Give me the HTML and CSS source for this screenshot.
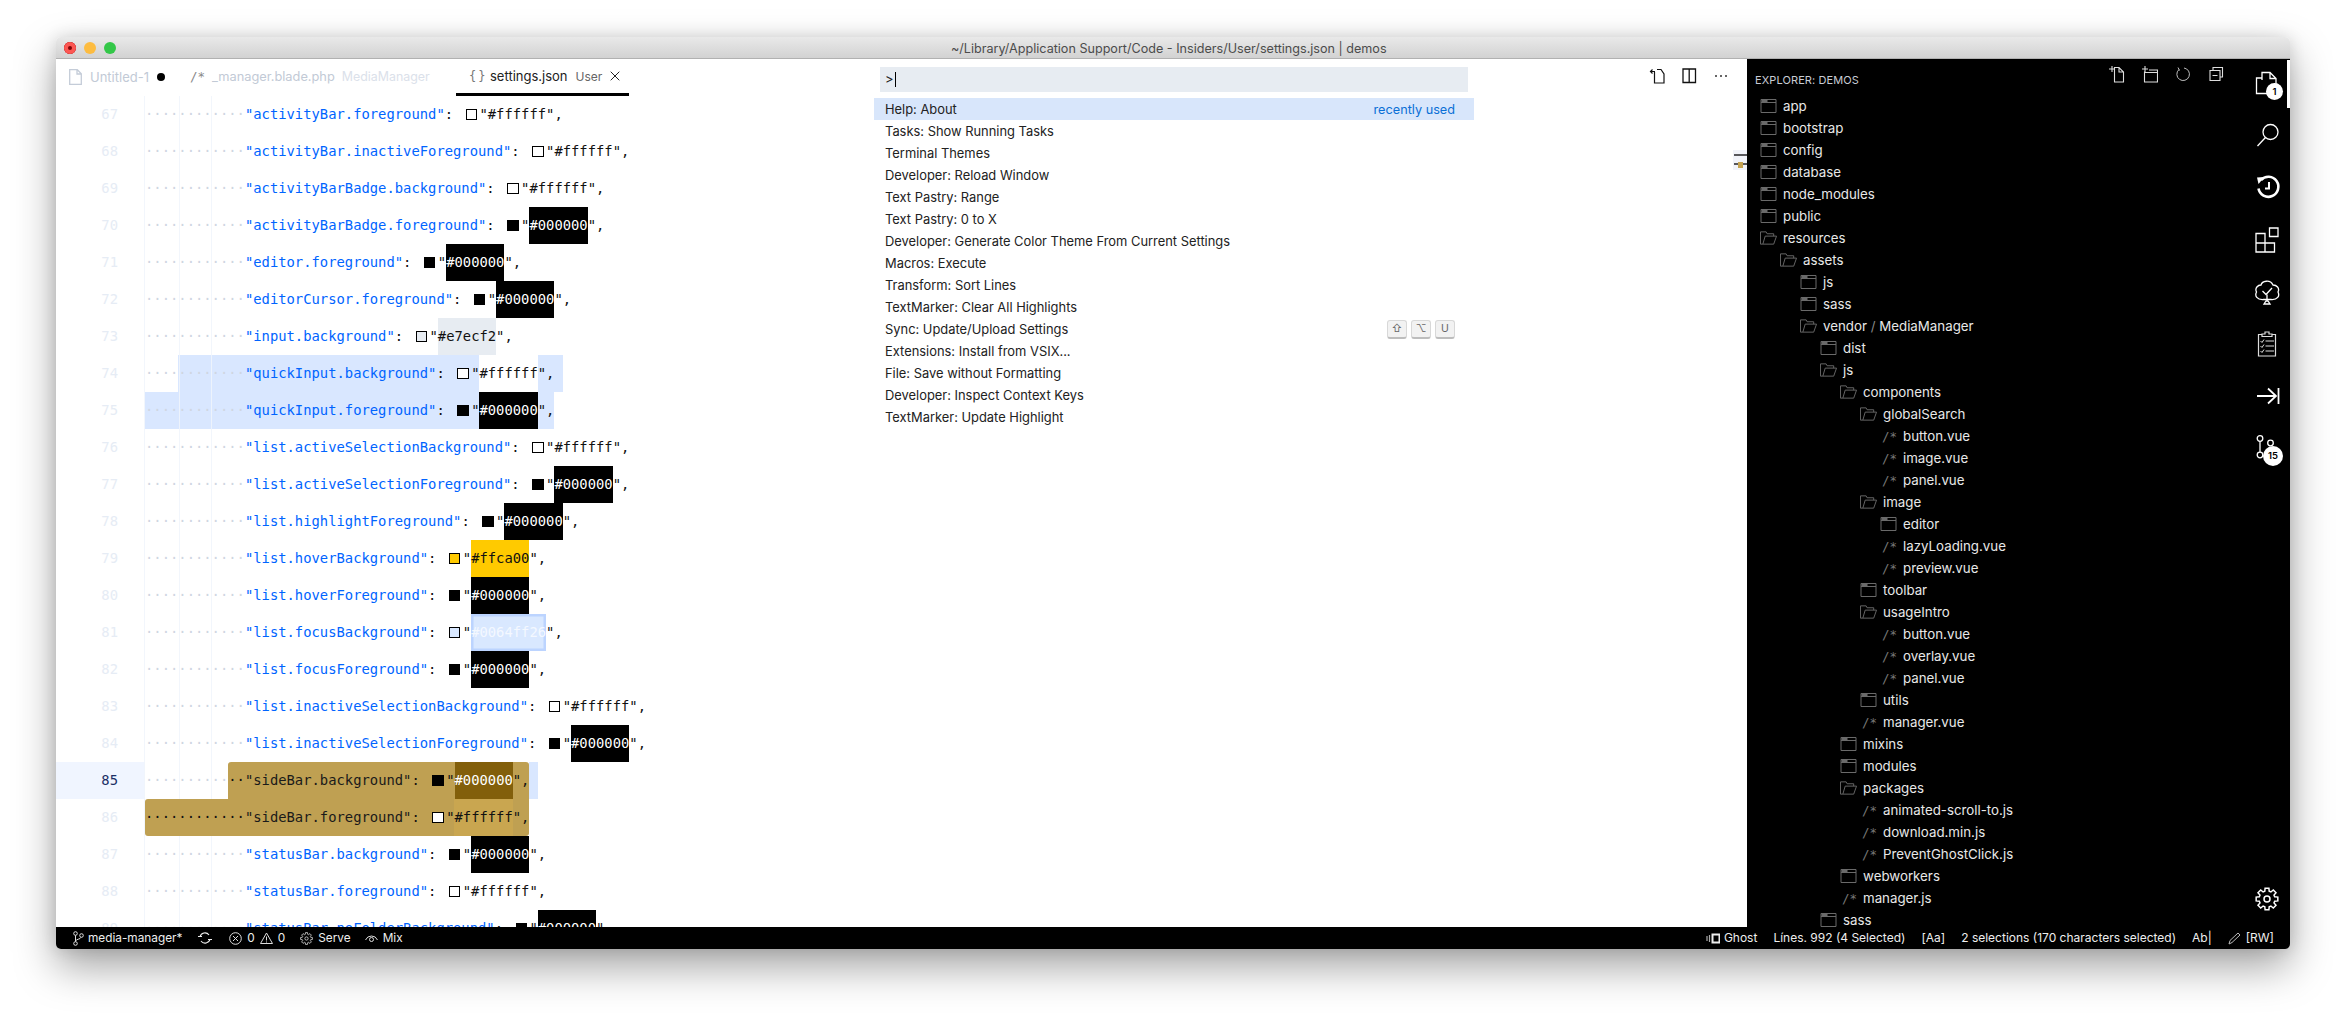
FILE: index.html
```html
<!DOCTYPE html>
<html lang="en">
<head>
<meta charset="utf-8">
<title>settings.json</title>
<link rel="stylesheet" href="styles.css">
</head>
<body>
<svg class="defs" width="0" height="0" aria-hidden="true">
  <symbol id="fc" viewBox="0 0 16 14"><path d="M.5.5h15v13H.5z M.5 3.5h15" fill="none" stroke="#6a6a6a"/><path d="M1 1h6v2H1z" fill="#6a6a6a"/></symbol>
  <symbol id="fo" viewBox="0 0 18 14"><path d="M3 13.5H.5V.5h6l1 2h7v2.5 M3 13.5 5.5 5h12l-3 8.500z" fill="none" stroke="#6a6a6a"/></symbol>
  <symbol id="gear" viewBox="-12 -12 24 24"><polygon points="7.69,-2.2 10.83,-1.91 10.83,1.91 7.69,2.2 7,3.88 9.01,6.31 6.31,9.01 3.88,7 2.2,7.69 1.91,10.83 -1.91,10.83 -2.2,7.69 -3.88,7 -6.31,9.01 -9.01,6.31 -7,3.88 -7.69,2.2 -10.83,1.91 -10.83,-1.91 -7.69,-2.2 -7,-3.88 -9.01,-6.31 -6.31,-9.01 -3.88,-7 -2.2,-7.69 -1.91,-10.83 1.91,-10.83 2.2,-7.69 3.88,-7 6.31,-9.01 9.01,-6.31 7,-3.88" fill="none" stroke="currentColor" stroke-width="1.5"/><circle r="3" fill="none" stroke="currentColor" stroke-width="1.5"/></symbol>
</svg>
<div class="window">
  <header class="titlebar">
    <span class="light red"></span><span class="light yellow"></span><span class="light green"></span>
    <span class="title">~/Library/Application Support/Code - Insiders/User/settings.json | demos</span>
  </header>
  <div class="main">
    <section class="editor">
      <div class="tabs">
        <div class="tab tab1">
          <svg class="i-file" width="13" height="16" viewBox="0 0 13 16"><path d="M.7.7h7.600l4 4v10.600H.7z M8 .7v4.300h4.300" fill="none" stroke="#c4ccd8" stroke-width="1.300"/></svg>
          <span class="dim">Untitled-1</span><span class="dirty"></span>
        </div>
        <div class="tab tab2"><span class="star">/*</span><span class="dim">_manager.blade.php</span><span class="dimmer">MediaManager</span></div>
        <div class="tab tab3"><span class="braces">{}</span><span class="name">settings.json</span><span class="user">User</span>
          <svg class="i-x" width="10" height="10" viewBox="0 0 10 10"><path d="M.7.7l8.600 8.600M9.300.7.7 9.300" stroke="#222" stroke-width="1"/></svg>
        </div>
        <div class="tab-actions">
          <svg width="16" height="16" viewBox="0 0 16 16"><path d="M5.500 4V15h9.500V6L12 1.500H8" fill="none" stroke="#111" stroke-width="1.200"/><path d="M6 3.500H1.800M3.500 1.500 1.500 3.500l2 2" fill="none" stroke="#111" stroke-width="1.200"/></svg>
          <svg width="16" height="16" viewBox="0 0 16 16"><path d="M2 1h12.500v13.500H2z M8.200 1v13.500" fill="none" stroke="#111" stroke-width="1.300"/></svg>
          <svg width="16" height="16" viewBox="0 0 16 16"><circle cx="3" cy="8" r="1" fill="#333"/><circle cx="8" cy="8" r="1" fill="#333"/><circle cx="13" cy="8" r="1" fill="#333"/></svg>
        </div>
      </div>
      <div class="code-area">
        <div class="row"><span class="ln">67</span><span class="code"><span class="ws">············</span><span class="k">"activityBar.foreground"</span>: <i class="dec w"></i>"#ffffff",</span></div>
        <div class="row"><span class="ln">68</span><span class="code"><span class="ws">············</span><span class="k">"activityBar.inactiveForeground"</span>: <i class="dec w"></i>"#ffffff",</span></div>
        <div class="row"><span class="ln">69</span><span class="code"><span class="ws">············</span><span class="k">"activityBarBadge.background"</span>: <i class="dec w"></i>"#ffffff",</span></div>
        <div class="row"><span class="ln">70</span><span class="code"><span class="ws">············</span><span class="k">"activityBarBadge.foreground"</span>: <i class="dec b"></i>"<span class="hl black">#000000</span>",</span></div>
        <div class="row"><span class="ln">71</span><span class="code"><span class="ws">············</span><span class="k">"editor.foreground"</span>: <i class="dec b"></i>"<span class="hl black">#000000</span>",</span></div>
        <div class="row"><span class="ln">72</span><span class="code"><span class="ws">············</span><span class="k">"editorCursor.foreground"</span>: <i class="dec b"></i>"<span class="hl black">#000000</span>",</span></div>
        <div class="row"><span class="ln">73</span><span class="code"><span class="ws">············</span><span class="k">"input.background"</span>: <i class="dec e"></i>"<span class="hl grey">#e7ecf2</span>",</span></div>
        <div class="row"><span class="ln">74</span><span class="code"><span class="ws">····</span><span class="sel"><span class="ws">········</span><span class="k">"quickInput.background"</span>: <i class="dec w"></i>"</span><span class="hl white">#ffffff</span><span class="sel">", </span></span></div>
        <div class="row"><span class="ln">75</span><span class="code"><span class="sel"><span class="ws">············</span><span class="k">"quickInput.foreground"</span>: <i class="dec b"></i>"</span><span class="hl black">#000000</span><span class="sel">",</span></span></div>
        <div class="row"><span class="ln">76</span><span class="code"><span class="ws">············</span><span class="k">"list.activeSelectionBackground"</span>: <i class="dec w"></i>"#ffffff",</span></div>
        <div class="row"><span class="ln">77</span><span class="code"><span class="ws">············</span><span class="k">"list.activeSelectionForeground"</span>: <i class="dec b"></i>"<span class="hl black">#000000</span>",</span></div>
        <div class="row"><span class="ln">78</span><span class="code"><span class="ws">············</span><span class="k">"list.highlightForeground"</span>: <i class="dec b"></i>"<span class="hl black">#000000</span>",</span></div>
        <div class="row"><span class="ln">79</span><span class="code"><span class="ws">············</span><span class="k">"list.hoverBackground"</span>: <i class="dec y"></i>"<span class="hl amber">#ffca00</span>",</span></div>
        <div class="row"><span class="ln">80</span><span class="code"><span class="ws">············</span><span class="k">"list.hoverForeground"</span>: <i class="dec b"></i>"<span class="hl black">#000000</span>",</span></div>
        <div class="row"><span class="ln">81</span><span class="code"><span class="ws">············</span><span class="k">"list.focusBackground"</span>: <i class="dec f"></i>"<span class="hl focus">#0064ff26</span>",</span></div>
        <div class="row"><span class="ln">82</span><span class="code"><span class="ws">············</span><span class="k">"list.focusForeground"</span>: <i class="dec b"></i>"<span class="hl black">#000000</span>",</span></div>
        <div class="row"><span class="ln">83</span><span class="code"><span class="ws">············</span><span class="k">"list.inactiveSelectionBackground"</span>: <i class="dec w"></i>"#ffffff",</span></div>
        <div class="row"><span class="ln">84</span><span class="code"><span class="ws">············</span><span class="k">"list.inactiveSelectionForeground"</span>: <i class="dec b"></i>"<span class="hl black">#000000</span>",</span></div>
        <div class="row"><span class="ln current">85</span><span class="code"><span class="ws">··········</span><span class="gold top"><span class="ws on">··</span><span class="k dark">"sideBar.background"</span>: <i class="dec b"></i>"<span class="hl brown">#000000</span>",</span><span class="sel"> </span></span></div>
        <div class="row"><span class="ln">86</span><span class="code"><span class="gold bottom"><span class="ws on">············</span><span class="k dark">"sideBar.foreground"</span>: <i class="dec w"></i>"<span class="hl sand">#ffffff</span>",</span></span></div>
        <div class="row"><span class="ln">87</span><span class="code"><span class="ws">············</span><span class="k">"statusBar.background"</span>: <i class="dec b"></i>"<span class="hl black">#000000</span>",</span></div>
        <div class="row"><span class="ln">88</span><span class="code"><span class="ws">············</span><span class="k">"statusBar.foreground"</span>: <i class="dec w"></i>"#ffffff",</span></div>
        <div class="row"><span class="ln">89</span><span class="code"><span class="ws">············</span><span class="k">"statusBar.noFolderBackground"</span>: <i class="dec b"></i>"<span class="hl black">#000000</span>",</span></div>
        <span class="guide g1"></span><span class="guide g2"></span><span class="guide g3"></span>
      </div>
      <div class="palette">
        <div class="palette-input">&gt;<span class="caret"></span></div>
        <div class="cmd active"><span>Help: About</span><span class="recent">recently used</span></div>
        <div class="cmd">Tasks: Show Running Tasks</div>
        <div class="cmd">Terminal Themes</div>
        <div class="cmd">Developer: Reload Window</div>
        <div class="cmd">Text Pastry: Range</div>
        <div class="cmd">Text Pastry: 0 to X</div>
        <div class="cmd">Developer: Generate Color Theme From Current Settings</div>
        <div class="cmd">Macros: Execute</div>
        <div class="cmd">Transform: Sort Lines</div>
        <div class="cmd">TextMarker: Clear All Highlights</div>
        <div class="cmd"><span>Sync: Update/Upload Settings</span><span class="keys"><kbd>⇧</kbd><kbd>⌥</kbd><kbd>U</kbd></span></div>
        <div class="cmd">Extensions: Install from VSIX...</div>
        <div class="cmd">File: Save without Formatting</div>
        <div class="cmd">Developer: Inspect Context Keys</div>
        <div class="cmd">TextMarker: Update Highlight</div>
      </div>
      <div class="overview"><span class="ov-line one"></span><span class="ov-line two"></span><span class="ov-mark"></span></div>
    </section>
    <aside class="sidebar">
      <div class="side-head">
        <span class="side-title">EXPLORER: DEMOS</span>
        <div class="side-actions">
          <svg width="16" height="18" viewBox="0 0 16 18"><path d="M5.500 2.500H10L14.500 7v10h-9z M10 2.500V7h4.500 M0 4h6M3 1v6" fill="none" stroke="#ddd" stroke-width="1.100"/></svg>
          <svg width="16" height="18" viewBox="0 0 16 18"><path d="M2.500 6.500V17h13V5H7 M3 7.500h12.500 M0 4h6M3 1v6" fill="none" stroke="#ddd" stroke-width="1.100"/></svg>
          <svg width="16" height="18" viewBox="0 0 16 18"><path d="M4 4.500a6.300 6.300 0 1 0 5-1.500M3 2.500l1.500 3" fill="none" stroke="#bbb" stroke-width="1"/></svg>
          <svg width="16" height="18" viewBox="0 0 16 18"><path d="M5 5V2.500h9.500V12H12 M2 5.500h10v10H2z M4.500 10.500h5" fill="none" stroke="#ddd" stroke-width="1.100"/></svg>
        </div>
      </div>
      <div class="tree">
        <div class="node d0"><svg class="ic"><use href="#fc"/></svg>app</div>
        <div class="node d0"><svg class="ic"><use href="#fc"/></svg>bootstrap</div>
        <div class="node d0"><svg class="ic"><use href="#fc"/></svg>config</div>
        <div class="node d0"><svg class="ic"><use href="#fc"/></svg>database</div>
        <div class="node d0"><svg class="ic"><use href="#fc"/></svg>node_modules</div>
        <div class="node d0"><svg class="ic"><use href="#fc"/></svg>public</div>
        <div class="node d0"><svg class="ic"><use href="#fo"/></svg>resources</div>
        <div class="node d1"><svg class="ic"><use href="#fo"/></svg>assets</div>
        <div class="node d2"><svg class="ic"><use href="#fc"/></svg>js</div>
        <div class="node d2"><svg class="ic"><use href="#fc"/></svg>sass</div>
        <div class="node d2"><svg class="ic"><use href="#fo"/></svg>vendor<span class="sep"> / </span>MediaManager</div>
        <div class="node d3"><svg class="ic"><use href="#fc"/></svg>dist</div>
        <div class="node d3"><svg class="ic"><use href="#fo"/></svg>js</div>
        <div class="node d4"><svg class="ic"><use href="#fo"/></svg>components</div>
        <div class="node d5"><svg class="ic"><use href="#fo"/></svg>globalSearch</div>
        <div class="node d6"><span class="fi">/*</span>button.vue</div>
        <div class="node d6"><span class="fi">/*</span>image.vue</div>
        <div class="node d6"><span class="fi">/*</span>panel.vue</div>
        <div class="node d5"><svg class="ic"><use href="#fo"/></svg>image</div>
        <div class="node d6"><svg class="ic"><use href="#fc"/></svg>editor</div>
        <div class="node d6"><span class="fi">/*</span>lazyLoading.vue</div>
        <div class="node d6"><span class="fi">/*</span>preview.vue</div>
        <div class="node d5"><svg class="ic"><use href="#fc"/></svg>toolbar</div>
        <div class="node d5"><svg class="ic"><use href="#fo"/></svg>usageIntro</div>
        <div class="node d6"><span class="fi">/*</span>button.vue</div>
        <div class="node d6"><span class="fi">/*</span>overlay.vue</div>
        <div class="node d6"><span class="fi">/*</span>panel.vue</div>
        <div class="node d5"><svg class="ic"><use href="#fc"/></svg>utils</div>
        <div class="node d5"><span class="fi">/*</span>manager.vue</div>
        <div class="node d4"><svg class="ic"><use href="#fc"/></svg>mixins</div>
        <div class="node d4"><svg class="ic"><use href="#fc"/></svg>modules</div>
        <div class="node d4"><svg class="ic"><use href="#fo"/></svg>packages</div>
        <div class="node d5"><span class="fi">/*</span>animated-scroll-to.js</div>
        <div class="node d5"><span class="fi">/*</span>download.min.js</div>
        <div class="node d5"><span class="fi">/*</span>PreventGhostClick.js</div>
        <div class="node d4"><svg class="ic"><use href="#fc"/></svg>webworkers</div>
        <div class="node d4"><span class="fi">/*</span>manager.js</div>
        <div class="node d3"><svg class="ic"><use href="#fc"/></svg>sass</div>
      </div>
    </aside>
    <nav class="activity">
      <span class="slider"></span>
      <div class="act a-files">
        <svg width="24" height="26" viewBox="0 0 24 26"><path d="M8 9V1.500h8l6 6V22h-3 M16 1.500v6h6 M8 7H2.500v15.500H14" fill="none" stroke="#fff" stroke-width="1.300"/></svg>
        <span class="badge small">1</span>
      </div>
      <div class="act a-search"><svg width="26" height="26" viewBox="0 0 26 26"><circle cx="15.500" cy="10" r="7.500" fill="none" stroke="#fff" stroke-width="1.300"/><path d="M10.500 15.500 2.500 24" stroke="#fff" stroke-width="1.300"/></svg></div>
      <div class="act a-hist"><svg width="26" height="26" viewBox="0 0 26 26"><path d="M6 6a10 10 0 1 1-2.500 8.500" fill="none" stroke="#fff" stroke-width="2.600"/><path d="M2 3.500 9.500 3 3.500 10z" fill="#fff"/><path d="M14 8v6.500h-4" fill="none" stroke="#fff" stroke-width="2"/></svg></div>
      <div class="act a-ext"><svg width="26" height="26" viewBox="0 0 26 26"><path d="M2 6.500h9V16H2z M2 16v9h18.500v-9H2 M11 16v9" fill="none" stroke="#fff" stroke-width="1.300"/><path d="M15.500 1h8.500v8.500h-8.500z" fill="none" stroke="#fff" stroke-width="1.300"/></svg></div>
      <div class="act a-tree"><svg width="26" height="26" viewBox="0 0 26 26"><path d="M9.500 20.500C3 21 .5 17 2.500 13 .5 9 4 6 7 6c1-4 9-6 12 0 3.500 0 7 3 5 7 2 4-.5 8-7 7.500-2.500 0-5 0-7.500 0z" fill="none" stroke="#fff" stroke-width="1.300"/><path d="M8.500 12l3.500 3.500 6-6.500" fill="none" stroke="#fff" stroke-width="1.300"/><path d="M13 15.500v6.500M10 25l2-3h2l2 3z" fill="none" stroke="#fff" stroke-width="1.300"/></svg></div>
      <div class="act a-clip"><svg width="26" height="26" viewBox="0 0 26 26"><path d="M8 3.500H4.500v21.500h17V3.500H18 M8 5.500h10V3h-3V1h-4v2H8z" fill="none" stroke="#ddd" stroke-width="1.200"/><path d="M11.500 10H20M11.500 15H20M11.500 20H20M6.500 10l1.500 1.500 2-3M6.500 15l1.500 1.500 2-3M6.500 20l1.500 1.500 2-3" fill="none" stroke="#ddd" stroke-width="1"/></svg></div>
      <div class="act a-arrow"><svg width="24" height="18" viewBox="0 0 24 18"><path d="M1 9h18M12 1.500 20 9l-8 7.500" fill="none" stroke="#fff" stroke-width="1.800"/><path d="M22.500 1v16" stroke="#fff" stroke-width="1.800"/></svg></div>
      <div class="act a-git">
        <svg width="26" height="26" viewBox="0 0 26 26"><circle cx="6" cy="3.500" r="2.800" fill="none" stroke="#fff" stroke-width="1.300"/><circle cx="16.500" cy="8" r="2.800" fill="none" stroke="#fff" stroke-width="1.300"/><circle cx="6" cy="20" r="2.800" fill="none" stroke="#fff" stroke-width="1.300"/><path d="M6 6.500V17" stroke="#fff" stroke-width="1.300"/></svg>
        <span class="badge">15</span>
      </div>
      <div class="act a-gear"><svg width="24" height="24"><use href="#gear"/></svg></div>
    </nav>
  </div>
  <footer class="status">
    <svg class="s-branch" width="11" height="15" viewBox="0 0 11 15"><circle cx="2.500" cy="2.500" r="1.800" fill="none" stroke="#ddd"/><circle cx="8.500" cy="4.500" r="1.800" fill="none" stroke="#ddd"/><circle cx="2.500" cy="12.500" r="1.800" fill="none" stroke="#ddd"/><path d="M2.500 4.300v6.400M8 6.300C7.500 8.500 3 8 2.500 10" fill="none" stroke="#ddd"/></svg>
    <span class="s-text s-name">media-manager*</span>
    <svg class="s-sync" width="14" height="12" viewBox="0 0 14 12"><path d="M2 5a5 5 0 0 1 9-2M12 7a5 5 0 0 1-9 2M0 4.500h4M10 7.500h4" fill="none" stroke="#eee" stroke-width="1.100"/></svg>
    <svg class="s-err" width="13" height="13" viewBox="0 0 13 13"><circle cx="6.500" cy="6.500" r="5.800" fill="none" stroke="#ddd"/><path d="M4 4l5 5M9 4l-5 5" stroke="#ddd"/></svg>
    <span class="s-text s-z1">0</span>
    <svg class="s-warn" width="13" height="12" viewBox="0 0 13 12"><path d="M6.500 1 12.500 11.500H.5z M6.500 4.500V8.500M6.500 9.500v1" fill="none" stroke="#ddd"/></svg>
    <span class="s-text s-z2">0</span>
    <svg class="s-gear" width="13" height="13"><use href="#gear"/></svg>
    <span class="s-text s-serve">Serve</span>
    <svg class="s-eye" width="13" height="10" viewBox="0 0 13 10"><path d="M.5 7a6.500 6.500 0 0 1 12 0" fill="none" stroke="#ddd"/><circle cx="6.500" cy="6.500" r="2" fill="none" stroke="#ddd"/></svg>
    <span class="s-text s-mix">Mix</span>
    <span class="status-right">
      <svg class="s-ghost" width="14" height="11" viewBox="0 0 14 11"><path d="M6.500 1.500h7v8h-7z" fill="none" stroke="#eee" stroke-width="2"/><path d="M1 3v5M3.500 2v7" stroke="#aaa" stroke-width="1.200"/></svg>
      <span class="s-text s-g">Ghost</span>
      <span class="s-text">Línes. 992 (4 Selected)</span>
      <span class="s-text">[Aa]</span>
      <span class="s-text">2 selections (170 characters selected)</span>
      <span class="s-text">Ab|</span>
      <svg class="s-pen" width="13" height="13" viewBox="0 0 13 13"><path d="M1 12l1-3.500L10 1l2 2-8 7.500z" fill="none" stroke="#bbb"/></svg>
      <span class="s-text s-rw">[RW]</span>
    </span>
  </footer>
</div>
</body>
</html>
```
FILE: styles.css
```css
* { box-sizing: border-box; }
html, body { margin: 0; height: 100%; }
body {
  background: #fff;
  padding: 37px 56px 74px;
  font-family: Inter, "Noto Sans", sans-serif;
  overflow: hidden;
}
.defs { position: absolute; }
.window {
  width: 2234px;
  height: 912px;
  display: flex;
  flex-direction: column;
  border-radius: 5px;
  background: #fff;
  box-shadow: 0 18px 42px rgba(0, 0, 0, .36), 0 0 16px rgba(0, 0, 0, .12);
  overflow: hidden;
}
.titlebar {
  height: 22px;
  flex: none;
  display: flex;
  align-items: center;
  padding-left: 8px;
  gap: 8px;
  background: linear-gradient(#e9e9e9, #d2d2d2);
  border-bottom: 1px solid #b1b1b1;
  position: relative;
}
.light { width: 12px; height: 12px; border-radius: 50%; }
.red { background: #fc5753; box-shadow: inset 0 0 0 4px #fc5753, inset 0 0 0 12px #7e0508; }
.yellow { background: #fdbc40; }
.green { background: #33c748; }
.title {
  position: absolute;
  left: 895px;
  top: 3px;
  font-size: 12.600px;
  line-height: 17px;
  color: #4c4c4c;
  white-space: pre;
}
.main { flex: none; height: 868px; display: flex; background: #fff; overflow: hidden; }

.editor { width: 1691px; flex: none; position: relative; overflow: hidden; }
.tabs { height: 37px; display: flex; font-size: 13px; }
.tab { display: flex; align-items: center; height: 37px; white-space: pre; padding-bottom: 2px; }
.tab1 { width: 122px; padding-left: 13px; }
.i-file { margin-right: 8px; }
.dim { color: #c2cad6; }
.dimmer { color: #dbe1ea; margin-left: 7px; font-size: 12.400px; }
.dirty { width: 8px; height: 8px; border-radius: 50%; background: #000; margin-left: 8px; }
.tab2 { width: 278px; padding-left: 12px; font-size: 12.800px; }
.star { font-family: "DejaVu Sans Mono", monospace; color: #888; width: 22px; font-size: 12.500px; }
.tab3 {
  width: 173px;
  padding-left: 13px;
  border-bottom: 3px solid #000;
  padding-bottom: 0;
}
.braces { font-family: "DejaVu Sans Mono", monospace; color: #777; width: 21px; font-size: 12px; letter-spacing: 2px; }
.name { color: #222; }
.user { color: #666; margin-left: 8px; font-size: 12px; }
.i-x { margin-left: 8px; }
.tab-actions { margin-left: auto; display: flex; align-items: center; gap: 16px; padding-right: 18px; padding-bottom: 3px; }

.code-area {
  position: relative;
  height: 831px;
  overflow: hidden;
  font-family: "DejaVu Sans Mono", monospace;
  font-size: 13.840px;
  color: #111;
}
.row { display: flex; height: 37px; line-height: 37px; white-space: pre; }
.ln { width: 89px; flex: none; padding-right: 27px; text-align: right; color: #e6ecf5; }
.ln.current { color: #1c2f66; background: #f0f5ff; }
.code { display: block; }
.ws { color: #cfd6e2; }
.ws.on { color: #111; }
.k { color: #0064ff; }
.k.dark { color: #1a1a1a; }
.dec {
  display: inline-block;
  width: 11.400px;
  height: 11.400px;
  margin: 0 2.400px 0 4.300px;
  vertical-align: -1px;
  border: 1.200px solid #000;
}
.dec.w { background: #fff; }
.dec.b { background: #000; }
.dec.e { background: #e7ecf2; }
.dec.y { background: #ffca00; }
.dec.f { background: #d9e8ff; }
.hl, .sel, .gold { display: inline-block; height: 37px; vertical-align: top; }
.black { background: #000; color: #fff; }
.white { background: #fff; }
.grey { background: #e7ecf2; }
.amber { background: #ffca00; }
.focus { background: #d9e8ff; color: #f4f8ff; box-shadow: inset 0 0 0 2.500px #bcd4ff; }
.sel { background: #d9e7ff; }
.gold { background: #bfa052; position: relative; z-index: 1; }
.gold.top { border-radius: 3px 3px 0 0; }
.gold.bottom { border-radius: 3px 0 3px 3px; }
.brown { background: #825f0b; color: #fff; }
.sand { background: #c9a650; }
.guide { position: absolute; top: 0; bottom: 0; width: 1px; background: rgba(240, 244, 252, .85); }
.g1 { left: 88px; }
.g2 { left: 123px; }
.g3 { left: 155px; }

.palette {
  position: absolute;
  left: 818px;
  top: 0;
  width: 600px;
  height: 369px;
  background: #fff;
  padding-top: 8px;
  font-size: 12.900px;
  color: #222;
}
.palette-input {
  margin: 0 6px 6px;
  height: 25px;
  background: #e7ecf2;
  padding-left: 5px;
  display: flex;
  align-items: center;
}
.caret { width: 1px; height: 15px; background: #000; margin-left: 1px; }
.cmd {
  height: 22px;
  line-height: 24px;
  padding: 0 19px 0 11px;
  display: flex;
  justify-content: space-between;
  white-space: pre;
}
.cmd.active { background: #d8e6fb; }
.recent { color: #0a6fd6; font-size: 12.700px; }
.keys { display: flex; gap: 4px; align-items: center; }
kbd {
  font: 10.500px/16px Inter, sans-serif;
  height: 19px;
  min-width: 20px;
  text-align: center;
  color: #666;
  background: #f2f2f2;
  border: 1px solid #d8d8d8;
  border-bottom: 2px solid #bdbdbd;
  border-radius: 3px;
}
.overview {
  position: absolute;
  right: 0;
  top: 91px;
  width: 14px;
  height: 20px;
  background: #f1f3fa;
}
.ov-line { position: absolute; left: 1px; right: 0; height: 1.500px; background: #57575c; }
.ov-line.one { top: 4px; }
.ov-line.two { top: 13px; }
.ov-mark { position: absolute; left: 5px; top: 12px; width: 5px; height: 6px; background: #c5a352; }

.sidebar { width: 497px; flex: none; background: #000; color: #e8e8e8; font-size: 13.300px; overflow: hidden; }
.side-head { height: 36px; display: flex; align-items: center; padding: 0 20px 0 8px; }
.side-title { font-size: 11px; color: #c8ccd4; position: relative; top: 3px; letter-spacing: .1px; }
.side-actions { margin-left: auto; display: flex; gap: 17px; position: relative; top: -3px; }
.node { height: 22px; display: flex; align-items: center; white-space: pre; }
.d0 { padding-left: 13px; }
.d1 { padding-left: 33px; }
.d2 { padding-left: 53px; }
.d3 { padding-left: 73px; }
.d4 { padding-left: 93px; }
.d5 { padding-left: 113px; }
.d6 { padding-left: 133px; }
.ic { width: 17px; height: 14px; margin-right: 6px; flex: none; }
.fi { width: 23px; padding-left: 2px; flex: none; font: 12.500px "DejaVu Sans Mono", monospace; color: #777; }
.sep { color: #888; }

.activity { width: 46px; flex: none; background: #000; position: relative; }
.slider { position: absolute; right: 0; top: 1px; width: 3px; height: 48px; background: #fff; }
.act { position: absolute; display: flex; }
.a-files { left: 10px; top: 12px; }
.a-search { left: 11px; top: 63px; }
.a-hist { left: 11px; top: 115px; }
.a-ext { left: 10px; top: 168px; }
.a-tree { left: 10px; top: 220px; }
.a-clip { left: 10px; top: 272px; }
.a-arrow { left: 12px; top: 328px; }
.a-git { left: 10px; top: 376px; }
.a-gear { left: 11px; top: 828px; color: #fff; }
.badge {
  position: absolute;
  left: 9px;
  top: 11px;
  width: 20px;
  height: 20px;
  border-radius: 50%;
  background: #fff;
  color: #000;
  font: 600 9.500px/20px Inter, sans-serif;
  text-align: center;
}
.badge.small { left: 12px; top: 12px; width: 17px; height: 17px; line-height: 17px; }

.status {
  height: 22px;
  flex: none;
  background: #000;
  color: #eee;
  display: flex;
  align-items: center;
  font-size: 11.800px;
  white-space: pre;
  padding-left: 17px;
}
.s-text { line-height: 22px; }
.s-name { margin-left: 4px; }
.s-sync { margin-left: 16px; }
.s-err { margin-left: 17px; }
.s-z1 { margin-left: 5px; }
.s-warn { margin-left: 5px; }
.s-z2 { margin-left: 5px; }
.s-gear { margin-left: 15px; color: #ddd; }
.s-serve { margin-left: 5px; }
.s-eye { margin-left: 14px; }
.s-mix { margin-left: 5px; }
.status-right { margin-left: auto; display: flex; align-items: center; gap: 16px; padding-right: 16px; font-size: 12px; }
.s-g { margin-left: -12px; }
.s-rw { margin-left: -11px; }
```
